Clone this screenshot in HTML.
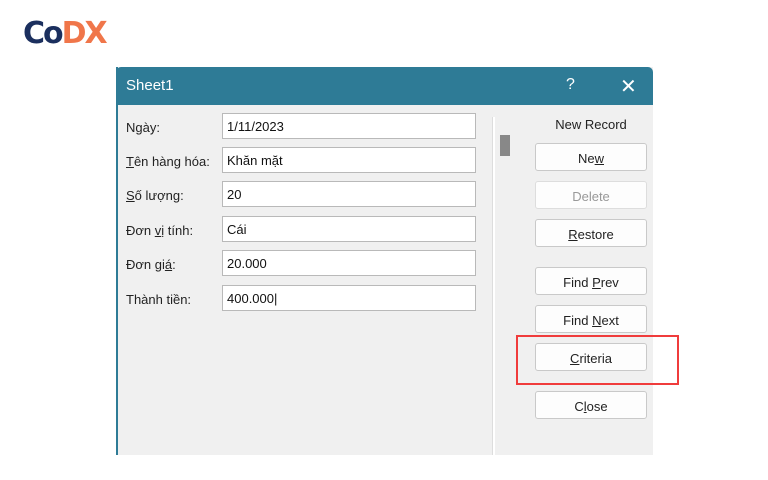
<!DOCTYPE html>
<html><head><meta charset="utf-8"><style>
body{margin:0;width:768px;height:480px;background:#fff;position:relative;overflow:hidden;font-family:"Segoe UI","Liberation Sans","DejaVu Sans",sans-serif;}
.abs{position:absolute}
.dlg{left:116px;top:67px;width:537px;height:388px;background:#f0f0f0;border-left:2px solid #2e7b96;box-sizing:border-box}
.tb{left:116px;top:67px;width:537px;height:38px;background:#2e7b96;border-radius:5px 5px 0 0;color:#fff}
.lbl{left:126px;font-size:13px;color:#222}
.inp{left:222px;width:254px;height:26px;background:#fff;border:1px solid #b9b9b9;box-sizing:border-box;font-size:13px;padding:5px 0 0 4px;color:#111}
.btn{left:535px;width:112px;height:28px;background:#fdfdfd;border:1px solid #c9c9c9;border-radius:3px;box-sizing:border-box;font-size:13px;text-align:center;line-height:29px;color:#222}
u{text-decoration:underline}
</style></head><body>
<div class="abs" style="left:23px;top:16px;font-family:'DejaVu Sans',sans-serif;font-weight:bold;font-size:30px;letter-spacing:-2px;line-height:36px"><span style="color:#1b2f5e">Co</span><span style="color:#f0764a">DX</span></div>
<div class="abs dlg"></div>
<div class="abs tb"><span class="abs" style="left:10px;top:10px;font-size:15px">Sheet1</span><span class="abs" style="left:450px;top:9px;font-size:16px">?</span><span class="abs" style="left:504px;top:7px;font-size:20px;font-weight:300">✕</span></div>
<div class="abs lbl" style="top:120px">Ngày:</div>
<div class="abs lbl" style="top:154px"><u>T</u>ên hàng hóa:</div>
<div class="abs lbl" style="top:188px"><u>S</u>ố lượng:</div>
<div class="abs lbl" style="top:223px">Đơn <u>v</u>ị tính:</div>
<div class="abs lbl" style="top:257px">Đơn gi<u>á</u>:</div>
<div class="abs lbl" style="top:292px">Thành tiền:</div>
<div class="abs inp" style="top:113px">1/11/2023</div>
<div class="abs inp" style="top:147px">Khăn mặt</div>
<div class="abs inp" style="top:181px">20</div>
<div class="abs inp" style="top:216px">Cái</div>
<div class="abs inp" style="top:250px">20.000</div>
<div class="abs inp" style="top:285px">400.000|</div>
<div class="abs" style="left:492px;top:117px;width:2px;height:338px;background:#fff;border-left:1px solid #ddd"></div>
<div class="abs" style="left:500px;top:135px;width:10px;height:21px;background:#888"></div>
<div class="abs" style="left:535px;top:117px;width:112px;text-align:center;font-size:13px;color:#222">New Record</div>
<div class="abs btn" style="top:143px">Ne<u>w</u></div>
<div class="abs btn" style="top:181px;color:#999;border-color:#ddd">Delete</div>
<div class="abs btn" style="top:219px"><u>R</u>estore</div>
<div class="abs btn" style="top:267px">Find <u>P</u>rev</div>
<div class="abs btn" style="top:305px">Find <u>N</u>ext</div>
<div class="abs btn" style="top:343px"><u>C</u>riteria</div>
<div class="abs btn" style="top:391px">C<u>l</u>ose</div>
<div class="abs" style="left:516px;top:335px;width:163px;height:50px;border:2px solid #f03c3c;box-sizing:border-box"></div>
</body></html>
